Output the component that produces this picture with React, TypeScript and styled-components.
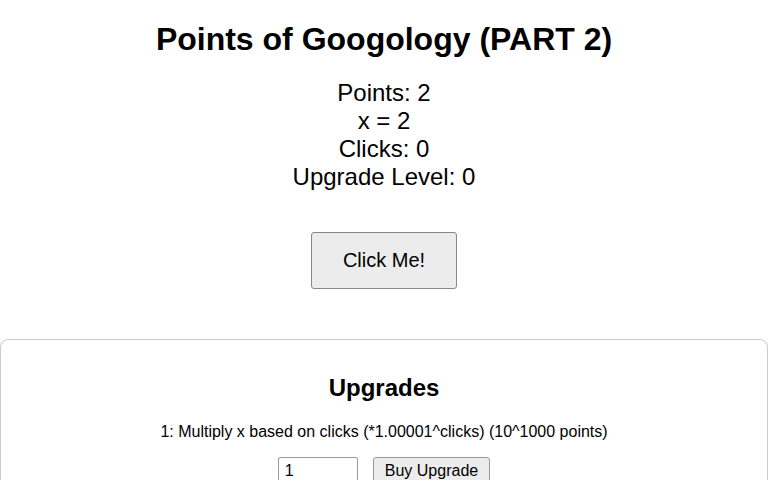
import styled, { createGlobalStyle } from "styled-components";

const GlobalStyle = createGlobalStyle`
  body {
    margin: 0;
    font-family: "Liberation Sans", Arial, sans-serif;
    background: #fff;
    color: #000;
    text-align: center;
  }
`;

const Title = styled.h1`
  font-size: 32px;
  font-weight: 700;
  margin: 21px 0;
`;

const Stats = styled.div`
  font-size: 24px;
  line-height: 28px;
`;

const ClickButton = styled.button`
  margin-top: 41px;
  font-family: inherit;
  font-size: 20px;
  color: #000;
  background: #ececec;
  border: 1px solid #888;
  border-radius: 3px;
  padding: 16px 31px;
  cursor: pointer;
`;

const Card = styled.section`
  margin-top: 50px;
  border: 1px solid #ccc;
  border-radius: 8px;
  padding: 14px 20px 20px;
`;

const CardTitle = styled.h2`
  font-size: 24px;
  margin: 20px 0 21px;
`;

const UpgradeText = styled.p`
  font-size: 16px;
  margin: 0 0 16px;
`;

const Row = styled.div`
  display: flex;
  justify-content: center;
  gap: 15px;
`;

const AmountInput = styled.input`
  width: 80px;
  box-sizing: border-box;
  font-family: inherit;
  font-size: 16px;
  padding: 4px 6px;
  border: 1px solid #999;
  border-radius: 2px;
`;

const BuyButton = styled.button`
  font-family: inherit;
  font-size: 16px;
  color: #000;
  background: #ececec;
  border: 1px solid #999;
  border-radius: 3px;
  padding: 4px 11px;
`;

export default function App() {
  return (
    <>
      <GlobalStyle />
      <Title>Points of Googology (PART 2)</Title>
      <Stats>
        <div>Points: 2</div>
        <div>x = 2</div>
        <div>Clicks: 0</div>
        <div>Upgrade Level: 0</div>
      </Stats>
      <ClickButton>Click Me!</ClickButton>
      <Card>
        <CardTitle>Upgrades</CardTitle>
        <UpgradeText>
          1: Multiply x based on clicks (*1.00001^clicks) (10^1000 points)
        </UpgradeText>
        <Row>
          <AmountInput defaultValue="1" />
          <BuyButton>Buy Upgrade</BuyButton>
        </Row>
      </Card>
    </>
  );
}
